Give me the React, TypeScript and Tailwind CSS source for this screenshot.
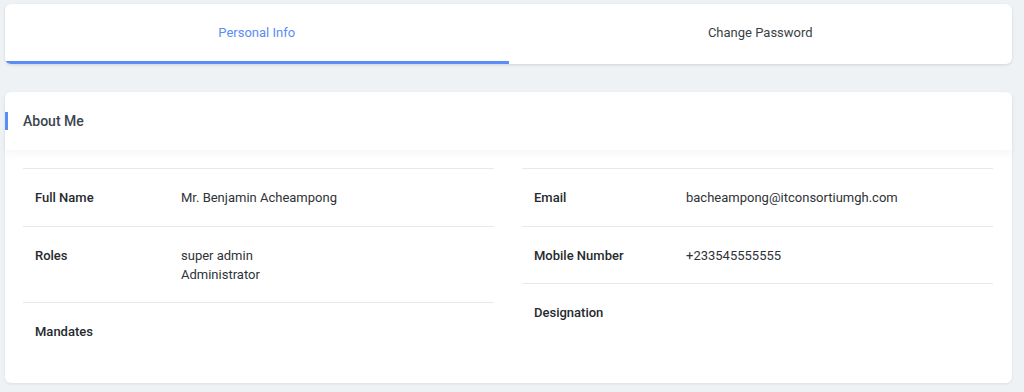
import React, { useState } from 'react'

const leftRows = [
  { label: 'Full Name', value: ['Mr. Benjamin Acheampong'] },
  { label: 'Roles', value: ['super admin', 'Administrator'] },
  { label: 'Mandates', value: [] as string[] },
]

const rightRows = [
  { label: 'Email', value: ['bacheampong@itconsortiumgh.com'] },
  { label: 'Mobile Number', value: ['+233545555555'] },
  { label: 'Designation', value: [] as string[] },
]

const InfoTable: React.FC<{
  rows: { label: string; value: string[] }[]
  labelWidth: string
}> = ({ rows, labelWidth }) => (
  <div className="flex flex-col">
    {rows.map((row) => (
      <div
        key={row.label}
        className="flex border-t border-[#e6e9ec] px-[12px] pt-[19px] pb-[18.5px] leading-[19px]"
      >
        <div className={`${labelWidth} shrink-0 font-medium text-[#262a2e]`}>
          {row.label}
        </div>
        <div className="flex flex-col text-[#2f3337]">
          {row.value.map((v) => (
            <span key={v}>{v}</span>
          ))}
        </div>
      </div>
    ))}
  </div>
)

const App: React.FC = () => {
  const [tab, setTab] = useState<'info' | 'password'>('info')
  return (
    <div
      className="min-h-[392px] bg-[#eef2f5] pt-[4px] pl-[5px] pr-[12px] text-[13px]"
      style={{ fontFamily: 'Roboto, "Liberation Sans", sans-serif' }}
    >
      <div className="flex h-[60px] overflow-hidden rounded-[6px] bg-white shadow-[0_1px_3px_rgba(0,0,0,0.12)]">
        <button
          onClick={() => setTab('info')}
          className={`flex-1 flex items-center justify-center border-b-[3px] ${tab === 'info' ? 'border-[#5a8df5] text-[#5a8df5]' : 'border-transparent text-[#3a3f45]'}`}
        >
          Personal Info
        </button>
        <button
          onClick={() => setTab('password')}
          className={`flex-1 flex items-center justify-center border-b-[3px] ${tab === 'password' ? 'border-[#5a8df5] text-[#5a8df5]' : 'border-transparent text-[#3a3f45]'}`}
        >
          Change Password
        </button>
      </div>

      <div className="mt-[28px] h-[291px] rounded-[6px] bg-white shadow-[0_1px_3px_rgba(0,0,0,0.08)]">
        <div className="flex h-[58px] items-center shadow-[0_4px_8px_rgba(0,0,0,0.035)]">
          <div className="h-[18px] w-[3px] bg-[#5a8df5]" />
          <h2 className="ml-[15px] text-[14px] font-medium text-[#3b4550]">About Me</h2>
        </div>
        <div className="grid grid-cols-2 gap-x-[28px] pl-[18px] pr-[19px] pt-[18px]">
          <InfoTable rows={leftRows} labelWidth="w-[146px]" />
          <InfoTable rows={rightRows} labelWidth="w-[152px]" />
        </div>
      </div>
    </div>
  )
}

export default App
